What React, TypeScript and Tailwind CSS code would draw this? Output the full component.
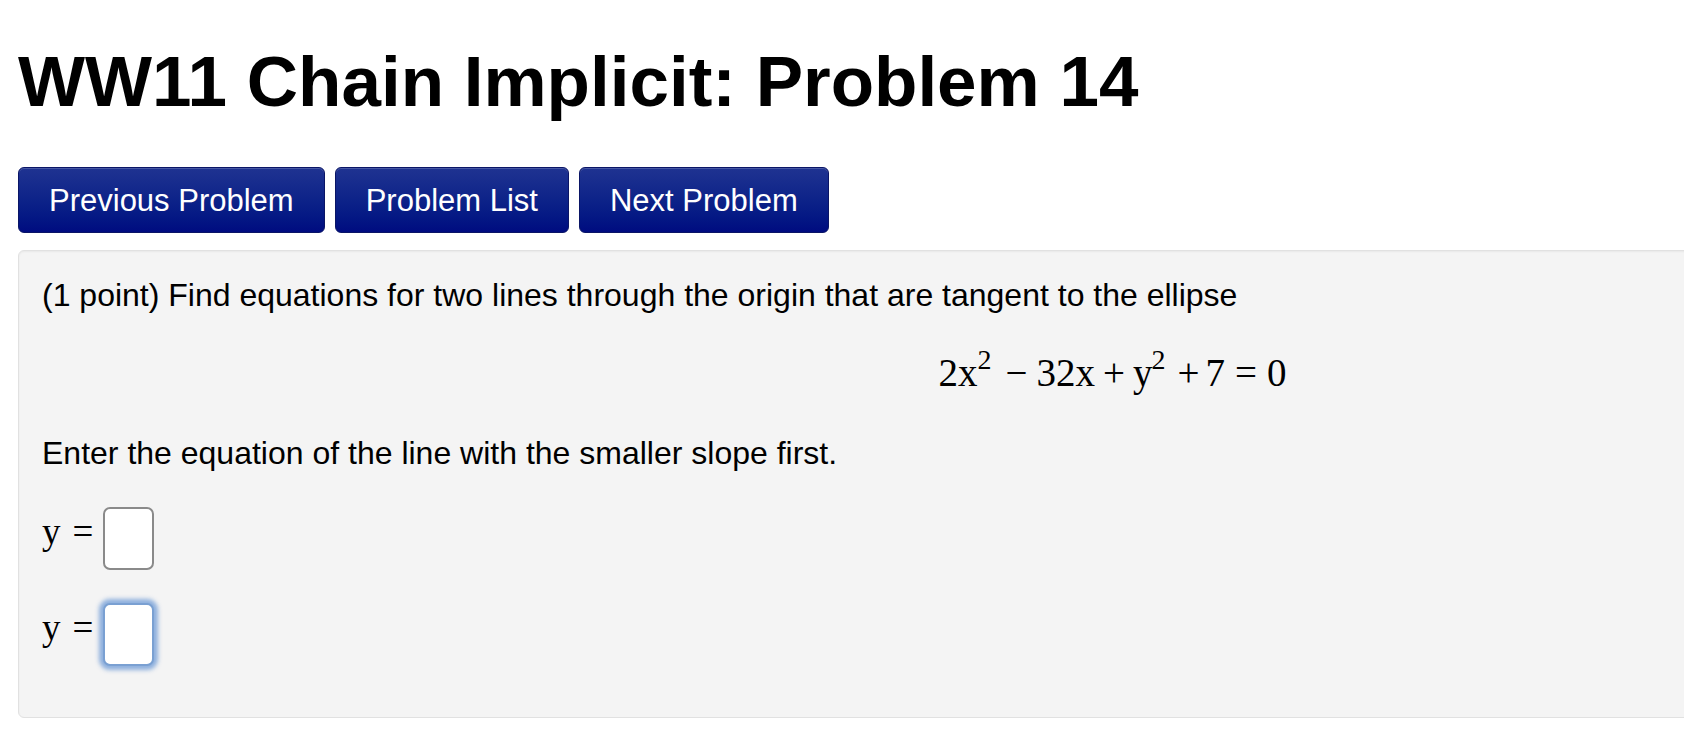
import React from 'react';

const navButton =
  "h-[66px] px-[30px] rounded-[6px] border border-[#0a1566] bg-gradient-to-b from-[#1f3391] to-[#000b80] text-white text-[31px] leading-none shadow-[inset_0_1px_0_rgba(255,255,255,0.18)]";

function Answer({ focused }: { focused?: boolean }) {
  return (
    <div className="flex items-start">
      <span className="mt-[6px] font-['Liberation_Serif',serif] text-[37px] leading-[37px] text-black">
        y<span className="ml-[12px]">=</span>
      </span>
      <input
        type="text"
        className={
          focused
            ? "ml-[10px] w-[51px] h-[63px] rounded-[7px] bg-white border-2 border-[#7aa0d2] shadow-[0_0_4px_4px_rgba(115,158,215,0.8)] outline-none"
            : "ml-[10px] w-[51px] h-[63px] rounded-[7px] bg-white border-2 border-[#8a8a8a] outline-none"
        }
      />
    </div>
  );
}

export default function App() {
  return (
    <div className="w-[1684px] h-[730px] overflow-hidden bg-white pl-[18px] font-['Liberation_Sans',Arial,sans-serif] text-black">
      <h1 className="mt-[46px] text-[71px] leading-none font-bold whitespace-nowrap">
        WW11 Chain Implicit: Problem 14
      </h1>

      <div className="mt-[50px] flex gap-[10px]">
        <button className={navButton}>Previous Problem</button>
        <button className={navButton}>Problem List</button>
        <button className={navButton}>Next Problem</button>
      </div>

      <div className="mt-[17px] w-[2166px] rounded-[6px] border border-[#e1e1e1] bg-[#f4f4f4] pl-[23px] pt-[26px] pb-[51px] shadow-[inset_0_1px_2px_rgba(0,0,0,0.05)]">
        <p className="text-[32px] leading-[36px] whitespace-nowrap">
          (1 point) Find equations for two lines through the origin that are tangent to the ellipse
        </p>

        <div className="mt-[36px] text-center font-['Liberation_Serif',serif] text-[39px] leading-[48px] whitespace-nowrap">
          <span className="inline-flex items-baseline">
            <span>2x</span>
            <span className="relative -top-[17px] text-[28px] leading-none">2</span>
            <span className="ml-[14px]">−</span>
            <span className="ml-[9px]">32x</span>
            <span className="ml-[8px]">+</span>
            <span className="ml-[8px]">y</span>
            <span className="relative -top-[17px] -ml-[1px] text-[28px] leading-none">2</span>
            <span className="ml-[12px]">+</span>
            <span className="ml-[6px]">7</span>
            <span className="ml-[10px]">=</span>
            <span className="ml-[10px]">0</span>
          </span>
        </div>

        <p className="mt-[38px] text-[32px] leading-[36px] whitespace-nowrap">
          Enter the equation of the line with the smaller slope first.
        </p>

        <div className="mt-[36px] flex flex-col gap-[33px]">
          <Answer />
          <Answer focused />
        </div>
      </div>
    </div>
  );
}
